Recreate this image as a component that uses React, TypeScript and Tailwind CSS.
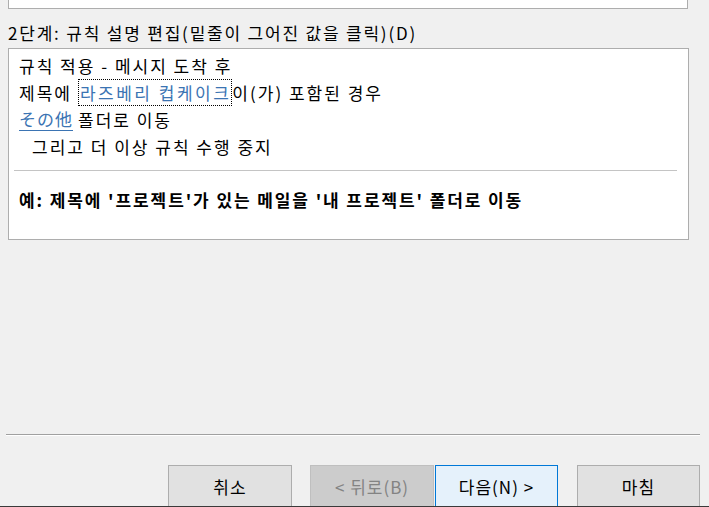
import React from "react";

export default function App() {
  const font = { fontFamily: '"Noto Sans CJK KR", "Noto Sans", sans-serif' };
  return (
    <div
      className="w-[709px] h-[507px] bg-[#f0f0f0] overflow-hidden flex flex-col text-black"
      style={font}
    >
      <div className="ml-[8px] w-[680px] h-[9px] bg-white border border-t-0 border-[#adadad]" />
      <div className="ml-[8px] mt-[14px] h-[20px] leading-[20px] text-[17px] tracking-[1.8px] whitespace-nowrap">
        2단계: 규칙 설명 편집(밑줄이 그어진 값을 클릭)(D)
      </div>
      <div className="ml-[8px] mt-[5px] w-[681px] h-[193px] bg-white border border-[#adadad] pt-[3px] pl-[10px] pr-[10px] text-[17px] tracking-[2px]">
        <div className="h-[27px] leading-[27px] whitespace-nowrap">규칙 적용 - 메시지 도착 후</div>
        <div className="h-[27px] leading-[27px] whitespace-nowrap flex items-center">
          <span>제목에</span>
          <span className="ml-[6px] inline-flex items-center h-[27px] pl-[1px] border border-dotted border-black text-[#3b74b3] tracking-[2.5px]">
            라즈베리 컵케이크
          </span>
          <span>이(가) 포함된 경우</span>
        </div>
        <div className="h-[27px] leading-[27px] whitespace-nowrap flex items-center">
          <span className="text-[#3b74b3] border-b border-[#3b74b3] leading-[22px] tracking-[1px]">その他</span>
          <span className="ml-[5px]">폴더로 이동</span>
        </div>
        <div className="h-[27px] leading-[27px] whitespace-nowrap pl-[13px]">그리고 더 이상 규칙 수행 중지</div>
        <div className="mt-[10px] -ml-[5px] mr-[1px] border-t border-[#c4c4c4]" />
        <div className="mt-[15px] h-[27px] leading-[27px] whitespace-nowrap font-bold text-[17px] tracking-[1.9px]">
          예: 제목에 '프로젝트'가 있는 메일을 '내 프로젝트' 폴더로 이동
        </div>
      </div>
      <div className="ml-[6px] mt-[194px] w-[694px] border-t border-[#a0a0a0] border-b border-b-white" />
      <div className="mt-[29px] flex h-[41px] text-[17px] tracking-[1px]">
        <button className="ml-[168px] w-[124px] h-[41px] bg-[#e1e1e1] border border-b-0 border-[#adadad] pt-[2px] text-black">
          취소
        </button>
        <button className="ml-[18px] w-[124px] h-[41px] bg-[#cccccc] border border-b-0 border-[#bfbfbf] pt-[2px] text-[#838383]">
          &lt; 뒤로(B)
        </button>
        <button className="ml-[1px] w-[123px] h-[41px] bg-[#e5f1fb] border border-b-0 border-[#0078d7] pt-[2px] text-black">
          다음(N) &gt;
        </button>
        <button className="ml-[19px] w-[123px] h-[41px] bg-[#e1e1e1] border border-b-0 border-[#adadad] pt-[2px] text-black">
          마침
        </button>
      </div>
      <div className="h-[1px] bg-[#3a3a3a]" />
    </div>
  );
}
